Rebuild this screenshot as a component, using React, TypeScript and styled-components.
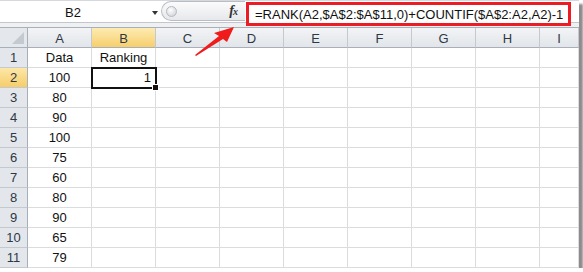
import React from "react";
import styled, { createGlobalStyle } from "styled-components";

const GlobalStyle = createGlobalStyle`
  body {
    margin: 0;
    background: #ffffff;
    font-family: "Liberation Sans", Arial, sans-serif;
  }
`;

const Frame = styled.div`
  position: relative;
  width: 579px;
  height: 268px;
  background: #ffffff;
  box-shadow: 4px 4px 2px rgba(0, 0, 0, 0.45);
`;

const FormulaBar = styled.div`
  display: flex;
  align-items: flex-start;
  height: 23px;
  border-top: 1px solid #d5d8dc;
  border-bottom: 1px solid #c3c7cd;
  box-sizing: border-box;
  background: #ffffff;
`;

const NameBox = styled.div`
  position: relative;
  width: 161px;
  height: 22px;
  display: flex;
  align-items: center;
  justify-content: center;
  padding-right: 15px;
  box-sizing: border-box;
  font-size: 13px;
  color: #111;
`;

const DropArrow = styled.span`
  position: absolute;
  right: 3px;
  top: 10px;
  width: 0;
  height: 0;
  border-left: 3.5px solid transparent;
  border-right: 3.5px solid transparent;
  border-top: 4px solid #333;
`;

const Pill = styled.div`
  display: flex;
  align-items: center;
  justify-content: space-between;
  width: 84px;
  height: 20px;
  padding: 0 8px 0 4px;
  box-sizing: border-box;
  border: 1px solid #b9bec5;
  border-right: none;
  border-radius: 11px 0 0 11px;
  background: linear-gradient(#fbfbfc, #e6e8eb);
`;

const Knob = styled.span`
  width: 9px;
  height: 9px;
  border-radius: 50%;
  border: 1px solid #b5b9bf;
  background: radial-gradient(circle at 40% 35%, #ffffff, #c9ccd1);
`;

const Fx = styled.span`
  font-family: "Liberation Serif", "Times New Roman", serif;
  font-style: italic;
  font-weight: bold;
  font-size: 14px;
  color: #333;
  letter-spacing: -1px;

  small {
    font-size: 10px;
  }
`;

const FormulaField = styled.div`
  position: relative;
  z-index: 2;
  width: 325px;
  height: 24px;
  margin-top: 1px;
  margin-left: 1px;
  border: 3px solid #ec1c24;
  box-sizing: border-box;
  padding-left: 6px;
  display: flex;
  align-items: center;
  font-size: 13px;
  color: #111;
  white-space: nowrap;
  background: #ffffff;
`;

const Strip = styled.div`
  height: 4px;
  background: #eef0f2;
  border-bottom: 1px solid #a9b0b8;
`;

const Sheet = styled.div`
  display: grid;
  grid-template-columns: 28px repeat(8, 64px) 1fr;
  grid-auto-rows: 20px;
  font-size: 13px;
`;

const Corner = styled.div`
  position: relative;
  background: #e4e7eb;
  border-right: 1px solid #a8afb8;
  border-bottom: 1px solid #a8afb8;

  &::after {
    content: "";
    position: absolute;
    right: 3px;
    bottom: 3px;
    width: 0;
    height: 0;
    border-left: 12px solid transparent;
    border-bottom: 12px solid #c4c9cf;
  }
`;

interface HeadProps {
  $active?: boolean;
}

const ColHead = styled.div<HeadProps>`
  display: flex;
  align-items: center;
  justify-content: center;
  padding-top: 2px;
  box-sizing: border-box;
  color: #2d3846;
  background: ${(p) =>
    p.$active
      ? "linear-gradient(#fdebb3, #f7cf6c)"
      : "linear-gradient(#f2f4f6, #e2e5e9)"};
  border-right: 1px solid #c4c9cf;
  border-bottom: 1px solid #a8afb8;
`;

const RowHead = styled.div<HeadProps>`
  display: flex;
  align-items: center;
  justify-content: center;
  color: #2d3846;
  background: ${(p) =>
    p.$active ? "linear-gradient(#fde7a8, #f6cd6a)" : "#e3e7ec"};
  border-right: 1px solid #a8afb8;
  border-bottom: 1px solid #c4c9cf;
`;

interface CellProps {
  $align?: "center" | "right";
  $selected?: boolean;
}

const Cell = styled.div<CellProps>`
  position: relative;
  display: flex;
  align-items: flex-end;
  justify-content: ${(p) => (p.$align === "right" ? "flex-end" : "center")};
  padding: 0 4px 2px;
  line-height: 15px;
  color: #111;
  border-right: 1px solid #dadcdf;
  border-bottom: 1px solid #dadcdf;
  outline: ${(p) => (p.$selected ? "2px solid #111" : "none")};
  outline-offset: ${(p) => (p.$selected ? "-1px" : "0")};
  z-index: ${(p) => (p.$selected ? 1 : 0)};
`;

const FillHandle = styled.span`
  position: absolute;
  right: -4px;
  bottom: -4px;
  width: 5px;
  height: 5px;
  background: #111;
  border: 1px solid #ffffff;
`;

const Arrow = styled.svg`
  position: absolute;
  left: 192px;
  top: 24px;
  z-index: 3;
`;

const columns = ["A", "B", "C", "D", "E", "F", "G", "H", "I"];
const data = ["100", "80", "90", "100", "75", "60", "80", "90", "65", "79"];

function App(): JSX.Element {
  const rows: { a: string; b: string }[] = [
    { a: "Data", b: "Ranking" },
    ...data.map((v, i) => ({ a: v, b: i === 0 ? "1" : "" })),
  ];

  return (
    <>
      <GlobalStyle />
      <Frame>
        <FormulaBar>
          <NameBox>
            B2
            <DropArrow />
          </NameBox>
          <Pill>
            <Knob />
            <Fx>
              f<small>x</small>
            </Fx>
          </Pill>
          <FormulaField>=RANK(A2,$A$2:$A$11,0)+COUNTIF($A$2:A2,A2)-1</FormulaField>
        </FormulaBar>
        <Strip />
        <Sheet>
          <Corner />
          {columns.map((c) => (
            <ColHead key={c} $active={c === "B"}>
              {c}
            </ColHead>
          ))}
          {rows.map((r, i) => (
            <React.Fragment key={i}>
              <RowHead $active={i === 1}>{i + 1}</RowHead>
              <Cell>{r.a}</Cell>
              {i === 1 ? (
                <Cell $align="right" $selected>
                  {r.b}
                  <FillHandle />
                </Cell>
              ) : (
                <Cell>{r.b}</Cell>
              )}
              {columns.slice(2).map((c) => (
                <Cell key={c} />
              ))}
            </React.Fragment>
          ))}
        </Sheet>
        <Arrow width="46" height="36" viewBox="0 0 46 36">
          <path d="M3 31 L27 12 L22 9 L42 3 L35 18 L31 15 L4 32 Z" fill="#f01c1c" />
        </Arrow>
      </Frame>
    </>
  );
}

export default App;
